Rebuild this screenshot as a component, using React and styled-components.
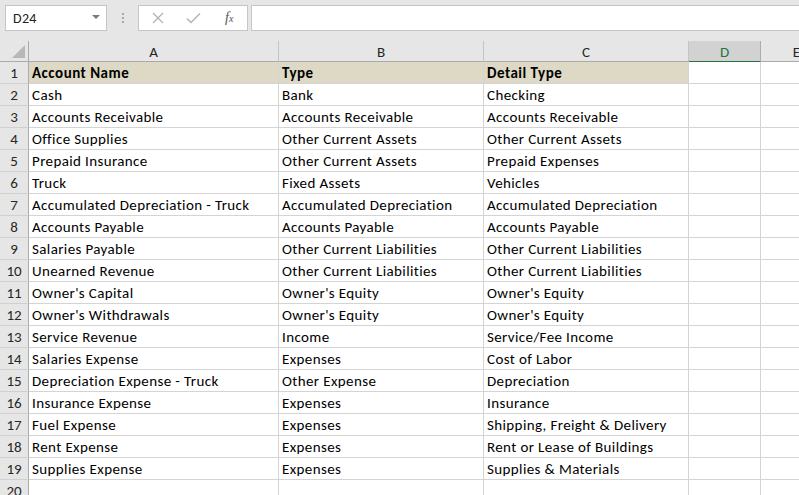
import React from 'react';
import styled, { createGlobalStyle } from 'styled-components';

const rows = [
  ['Cash', 'Bank', 'Checking'],
  ['Accounts Receivable', 'Accounts Receivable', 'Accounts Receivable'],
  ['Office Supplies', 'Other Current Assets', 'Other Current Assets'],
  ['Prepaid Insurance', 'Other Current Assets', 'Prepaid Expenses'],
  ['Truck', 'Fixed Assets', 'Vehicles'],
  ['Accumulated Depreciation - Truck', 'Accumulated Depreciation', 'Accumulated Depreciation'],
  ['Accounts Payable', 'Accounts Payable', 'Accounts Payable'],
  ['Salaries Payable', 'Other Current Liabilities', 'Other Current Liabilities'],
  ['Unearned Revenue', 'Other Current Liabilities', 'Other Current Liabilities'],
  ["Owner's Capital", "Owner's Equity", "Owner's Equity"],
  ["Owner's Withdrawals", "Owner's Equity", "Owner's Equity"],
  ['Service Revenue', 'Income', 'Service/Fee Income'],
  ['Salaries Expense', 'Expenses', 'Cost of Labor'],
  ['Depreciation Expense - Truck', 'Other Expense', 'Depreciation'],
  ['Insurance Expense', 'Expenses', 'Insurance'],
  ['Fuel Expense', 'Expenses', 'Shipping, Freight & Delivery'],
  ['Rent Expense', 'Expenses', 'Rent or Lease of Buildings'],
  ['Supplies Expense', 'Expenses', 'Supplies & Materials'],
];

const columns = ['A', 'B', 'C', 'D', 'E'];

const App = () => {
  return (
    <>
      <GlobalStyle />
      <Window>
        <Toolbar>
          <NameBox>
            <span>D24</span>
            <Caret />
          </NameBox>
          <Grip>
            <i /><i /><i />
          </Grip>
          <FormulaButtons>
            <svg width="12" height="12" viewBox="0 0 12 12">
              <path d="M1 1 L11 11 M11 1 L1 11" stroke="#b3b3b3" strokeWidth="1.3" fill="none" />
            </svg>
            <svg width="15" height="12" viewBox="0 0 15 12">
              <path d="M1 6.5 L5 10.5 L14 1.5" stroke="#b3b3b3" strokeWidth="1.5" fill="none" />
            </svg>
            <Fx>f<sub>x</sub></Fx>
          </FormulaButtons>
          <FormulaInput />
        </Toolbar>

        <Sheet>
          <Corner>
            <svg width="13" height="13" viewBox="0 0 13 13">
              <polygon points="13,0 13,13 0,13" fill="#b8b8b8" />
            </svg>
          </Corner>
          {columns.map((c) => (
            <ColHead key={c} active={c === 'D'}>{c}</ColHead>
          ))}

          <RowHead>1</RowHead>
          <Cell head>Account Name</Cell>
          <Cell head>Type</Cell>
          <Cell head>Detail Type</Cell>
          <Cell />
          <Cell />

          {rows.map((r, i) => (
            <React.Fragment key={i}>
              <RowHead>{i + 2}</RowHead>
              <Cell>{r[0]}</Cell>
              <Cell>{r[1]}</Cell>
              <Cell>{r[2]}</Cell>
              <Cell />
              <Cell />
            </React.Fragment>
          ))}

          <RowHead>20</RowHead>
          <Cell />
          <Cell />
          <Cell />
          <Cell />
          <Cell />
        </Sheet>
      </Window>
    </>
  );
};

export default App;

const GlobalStyle = createGlobalStyle`
  html, body {
    margin: 0;
    padding: 0;
    background: #ffffff;
    overflow: hidden;
  }
  * {
    box-sizing: border-box;
  }
`;

const Window = styled.div`
  width: 799px;
  height: 495px;
  overflow: hidden;
  font-family: Carlito, Lato, "Liberation Sans", sans-serif;
  color: #000;
`;

const Toolbar = styled.div`
  height: 41px;
  background: #e6e6e6;
  display: flex;
  align-items: flex-start;
  padding: 5px 0 0 5px;
`;

const NameBox = styled.div`
  width: 102px;
  height: 26px;
  background: #fff;
  border: 1px solid #c6c6c6;
  display: flex;
  align-items: center;
  justify-content: space-between;
  padding: 0 6px 0 7px;
  font-size: 14px;
  letter-spacing: 0.3px;
  color: #222;
`;

const Caret = styled.span`
  width: 0;
  height: 0;
  border-left: 4px solid transparent;
  border-right: 4px solid transparent;
  border-top: 4px solid #7a7a7a;
  margin-top: -3px;
`;

const Grip = styled.div`
  width: 31px;
  height: 26px;
  display: flex;
  flex-direction: column;
  align-items: center;
  justify-content: center;
  gap: 2px;

  i {
    width: 2px;
    height: 2px;
    background: #a8a8a8;
  }
`;

const FormulaButtons = styled.div`
  width: 110px;
  height: 26px;
  background: #fff;
  border: 1px solid #c6c6c6;
  display: flex;
  align-items: center;
  padding: 0 13px 0 13px;
  gap: 22px;
`;

const Fx = styled.span`
  font-family: "Liberation Serif", serif;
  font-style: italic;
  font-size: 14px;
  color: #555;
  margin-left: 2px;

  sub {
    font-size: 10px;
    vertical-align: baseline;
  }
`;

const FormulaInput = styled.div`
  flex: 1;
  height: 26px;
  margin-left: 3px;
  background: #fff;
  border: 1px solid #c6c6c6;
  border-right: none;
`;

const Sheet = styled.div`
  display: grid;
  grid-template-columns: 29px 250px 205px 205px 72px 72px;
  grid-template-rows: 21px;
  grid-auto-rows: 22px;
  background: #fff;
`;

const Corner = styled.div`
  background: #e6e6e6;
  border-right: 1px solid #ababab;
  border-bottom: 1px solid #ababab;
  display: flex;
  align-items: flex-end;
  justify-content: flex-end;
  padding: 0 3px 3px 0;
`;

const ColHead = styled.div`
  background: ${(p) => (p.active ? '#d2d2d2' : '#e6e6e6')};
  color: ${(p) => (p.active ? '#217346' : '#262626')};
  border-right: 1px solid ${(p) => (p.active ? '#ababab' : '#c4c4c4')};
  border-bottom: ${(p) => (p.active ? '2px solid #217346' : '1px solid #ababab')};
  margin-bottom: ${(p) => (p.active ? '-1px' : '0')};
  font-size: 15px;
  display: flex;
  align-items: center;
  justify-content: center;
  padding-top: 1px;
`;

const RowHead = styled.div`
  background: #e6e6e6;
  color: #262626;
  border-right: 1px solid #ababab;
  border-bottom: 1px solid #d0d0d0;
  font-size: 15px;
  display: flex;
  align-items: center;
  justify-content: center;
  padding-top: 1px;
`;

const Cell = styled.div`
  background: ${(p) => (p.head ? '#ddd9c4' : '#fff')};
  font-weight: ${(p) => (p.head ? 700 : 400)};
  border-right: 1px solid #d4d4d4;
  border-bottom: 1px solid #d4d4d4;
  font-size: 15px;
  letter-spacing: ${(p) => (p.head ? '0.5px' : '0.38px')};
  display: flex;
  align-items: center;
  padding: 1px 0 0 3px;
  white-space: nowrap;
  overflow: hidden;
`;
